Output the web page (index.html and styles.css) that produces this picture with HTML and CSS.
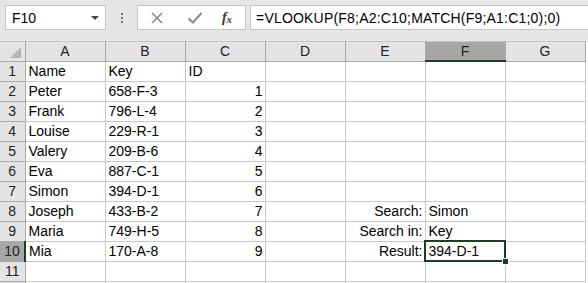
FILE: index.html
```html
<!DOCTYPE html>
<html>
<head>
<meta charset="utf-8">
<link rel="stylesheet" href="styles.css">
</head>
<body>
<div class="toolbar">
  <div class="namebox"><span class="ref">F10</span><span class="caret"></span></div>
  <div class="grip"><i></i><i></i><i></i></div>
  <div class="buttons">
    <svg class="btn" width="14" height="14" viewBox="0 0 14 14"><path d="M2 2L12 12M12 2L2 12" stroke="#8c8c8c" stroke-width="1.6" fill="none"/></svg>
    <svg class="btn" width="16" height="14" viewBox="0 0 16 14"><path d="M1.5 7.5L6 11.5L14.5 2" stroke="#8c8c8c" stroke-width="2" fill="none"/></svg>
    <span class="fx">f<sub>x</sub></span>
  </div>
  <div class="formula">=VLOOKUP(F8;A2:C10;MATCH(F9;A1:C1;0);0)</div>
</div>
<table class="sheet">
  <colgroup><col class="rh"><col class="c"><col class="c"><col class="c"><col class="c"><col class="c"><col class="c"><col class="c"></colgroup>
  <tr class="hdr"><th class="corner"><span class="tri"></span></th><th>A</th><th>B</th><th>C</th><th>D</th><th>E</th><th class="sel">F</th><th>G</th></tr>
  <tr><th>1</th><td>Name</td><td>Key</td><td>ID</td><td></td><td></td><td></td><td></td></tr>
  <tr><th>2</th><td>Peter</td><td>658-F-3</td><td class="num">1</td><td></td><td></td><td></td><td></td></tr>
  <tr><th>3</th><td>Frank</td><td>796-L-4</td><td class="num">2</td><td></td><td></td><td></td><td></td></tr>
  <tr><th>4</th><td>Louise</td><td>229-R-1</td><td class="num">3</td><td></td><td></td><td></td><td></td></tr>
  <tr><th>5</th><td>Valery</td><td>209-B-6</td><td class="num">4</td><td></td><td></td><td></td><td></td></tr>
  <tr><th>6</th><td>Eva</td><td>887-C-1</td><td class="num">5</td><td></td><td></td><td></td><td></td></tr>
  <tr><th>7</th><td>Simon</td><td>394-D-1</td><td class="num">6</td><td></td><td></td><td></td><td></td></tr>
  <tr><th>8</th><td>Joseph</td><td>433-B-2</td><td class="num">7</td><td></td><td class="num">Search:</td><td>Simon</td><td></td></tr>
  <tr><th>9</th><td>Maria</td><td>749-H-5</td><td class="num">8</td><td></td><td class="num">Search in:</td><td>Key</td><td></td></tr>
  <tr><th class="selrow">10</th><td>Mia</td><td>170-A-8</td><td class="num">9</td><td></td><td class="num">Result:</td><td class="active">394-D-1<span class="handle"></span></td><td></td></tr>
  <tr><th>11</th><td></td><td></td><td></td><td></td><td></td><td></td><td></td></tr>
  <tr><th></th><td></td><td></td><td></td><td></td><td></td><td></td><td></td></tr>
</table>
</body>
</html>
```

FILE: styles.css
```css
html, body {
  margin: 0;
  padding: 0;
  background: #ffffff;
  overflow: hidden;
  font-family: "Liberation Sans", Arial, sans-serif;
  color: #000;
}

.toolbar {
  height: 41px;
  box-sizing: border-box;
  background: #e6e6e6;
  display: flex;
  align-items: flex-start;
  padding: 5px 0 0 5px;
}

.namebox {
  width: 101px;
  height: 25px;
  box-sizing: border-box;
  background: #fff;
  border: 1px solid #c6c6c6;
  display: flex;
  align-items: center;
  justify-content: space-between;
  padding: 0 6px 0 6px;
  font-size: 14px;
}

.caret {
  width: 0;
  height: 0;
  border-left: 4px solid transparent;
  border-right: 4px solid transparent;
  border-top: 4px solid #444;
}

.grip {
  width: 31px;
  height: 25px;
  display: flex;
  flex-direction: column;
  align-items: center;
  justify-content: center;
  gap: 2px;
}

.grip i {
  display: block;
  width: 2px;
  height: 2px;
  background: #777;
}

.buttons {
  width: 109px;
  height: 25px;
  box-sizing: border-box;
  background: #fff;
  border: 1px solid #c6c6c6;
  display: flex;
  align-items: center;
  padding: 0 0 0 12px;
}

.buttons .btn:first-child { margin-right: 23px; }
.buttons .btn:nth-child(2) { margin-right: 19px; }

.fx {
  font-family: "Liberation Serif", serif;
  font-style: italic;
  font-weight: bold;
  font-size: 14px;
  color: #333;
  line-height: 1;
}

.fx sub {
  font-size: 10px;
  vertical-align: -1px;
}

.formula {
  flex: 1;
  margin-left: 4px;
  height: 25px;
  box-sizing: border-box;
  background: #fff;
  border: 1px solid #c6c6c6;
  border-right: none;
  display: flex;
  align-items: center;
  padding-left: 5px;
  font-size: 14px;
  letter-spacing: 0.2px;
  white-space: nowrap;
  overflow: hidden;
}

.sheet {
  border-collapse: collapse;
  table-layout: fixed;
  font-size: 14px;
}

col.rh { width: 25px; }
col.c { width: 80px; }

.sheet th, .sheet td {
  height: 20px;
  padding: 0 2px 0 3px;
  box-sizing: border-box;
  line-height: 19px;
  white-space: nowrap;
  overflow: visible;
}

.sheet td {
  border-right: 1px solid #c8c8c8;
  border-bottom: 1px solid #c8c8c8;
  text-align: left;
  vertical-align: bottom;
}

.sheet th {
  background: #e4e4e4;
  font-weight: normal;
  text-align: center;
  color: #222;
  border-right: 1px solid #ababab;
  border-bottom: 1px solid #ababab;
  padding: 0;
}

.sheet tr.hdr th {
  height: 19px;
  line-height: 18px;
  border-top: 1px solid #c6c6c6;
}

.sheet td.num { text-align: right; }

.sheet th.sel {
  background: #a7a7a7;
  border-bottom: 2px solid #1e3d22;
}

.sheet th.selrow {
  background: #a7a7a7;
  border-right: 2px solid #1e3d22;
}

.corner {
  position: relative;
}

.tri {
  position: absolute;
  right: 4px;
  bottom: 3px;
  width: 0;
  height: 0;
  border-left: 11px solid transparent;
  border-bottom: 11px solid #b4b4b4;
}

.sheet td.active {
  position: relative;
  outline: 2px solid #1e3d22;
  outline-offset: -1px;
}

.handle {
  position: absolute;
  right: -4px;
  bottom: -4px;
  width: 5px;
  height: 5px;
  background: #1e3d22;
  border: 1px solid #fff;
}
```
